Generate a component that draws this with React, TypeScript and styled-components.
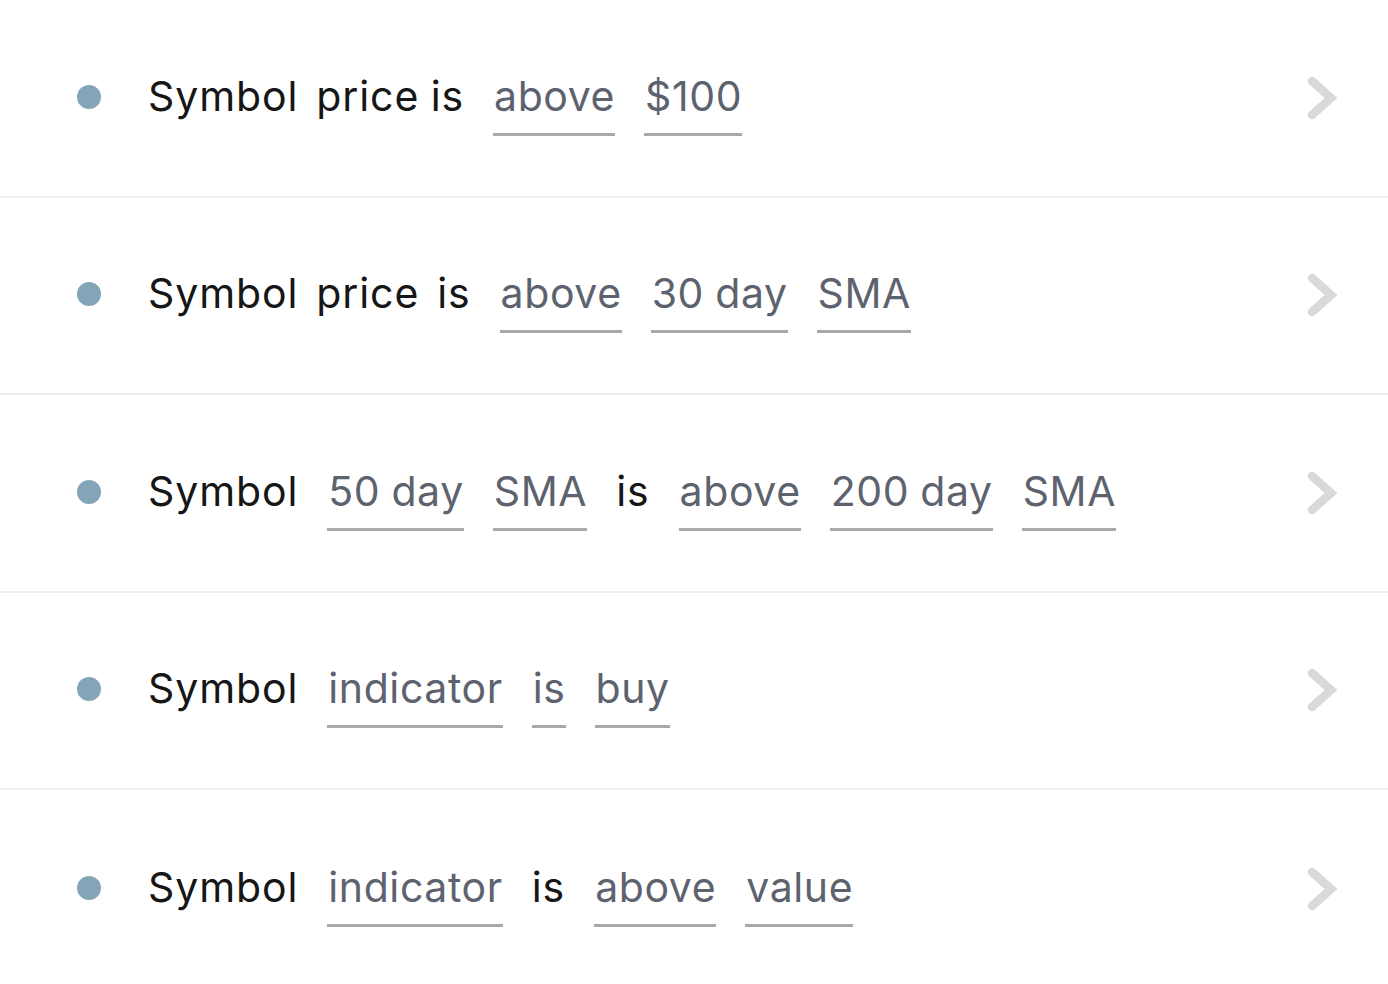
import React from 'react';
import styled, { createGlobalStyle } from 'styled-components';

const Global = createGlobalStyle`
  html, body { margin: 0; padding: 0; background: #fff; }
  body { font-family: Inter, "Open Sans", sans-serif; }
`;

type Part = { text: string; chip?: boolean; tight?: boolean };

const rules: Part[][] = [
  [{ text: 'Symbol' }, { text: 'price is', tight: true }, { text: 'above', chip: true }, { text: '$100', chip: true }],
  [{ text: 'Symbol' }, { text: 'price', tight: true }, { text: 'is', tight: true }, { text: 'above', chip: true }, { text: '30 day', chip: true }, { text: 'SMA', chip: true }],
  [{ text: 'Symbol' }, { text: '50 day', chip: true }, { text: 'SMA', chip: true }, { text: 'is' }, { text: 'above', chip: true }, { text: '200 day', chip: true }, { text: 'SMA', chip: true }],
  [{ text: 'Symbol' }, { text: 'indicator', chip: true }, { text: 'is', chip: true }, { text: 'buy', chip: true }],
  [{ text: 'Symbol' }, { text: 'indicator', chip: true }, { text: 'is' }, { text: 'above', chip: true }, { text: 'value', chip: true }],
];

const List = styled.div`
  display: flex;
  flex-direction: column;
  width: 1388px;
`;

const Row = styled.div`
  display: flex;
  align-items: center;
  height: 197.5px;
  padding: 0 50px 4px 77px;
  box-sizing: border-box;
  border-bottom: 2px solid #eeeeee;
  &:last-child { border-bottom: 0; }
`;

const Dot = styled.span`
  flex-shrink: 0;
  width: 24px;
  height: 24px;
  border-radius: 50%;
  background: #84a5b7;
  margin: 0 47px 0 0;
  position: relative;
  top: 1px;
`;

const Sentence = styled.div`
  flex: 1;
  display: flex;
  align-items: flex-start;
  gap: 29px;
  font-size: 41px;
  line-height: 54px;
  letter-spacing: 0.6px;
  word-spacing: -1px;
`;

const Word = styled.span<{ $tight: boolean }>`
  color: #161616;
  letter-spacing: 0.9px;
  margin-left: ${({ $tight }) => ($tight ? '-11px' : '0')};
`;

const Chip = styled.span`
  color: #5d636e;
  padding: 0 0 10px 1px;
  margin-bottom: -13px;
  border-bottom: 3px solid #a9a9a9;
`;

const Chevron = styled.svg`
  flex-shrink: 0;
  width: 32px;
  height: 46px;
  position: relative;
  top: 2px;
`;

export default function App() {
  return (
    <>
      <Global />
      <List>
        {rules.map((parts, i) => (
          <Row key={i}>
            <Dot />
            <Sentence>
              {parts.map((p, j) =>
                p.chip ? (
                  <Chip key={j}>{p.text}</Chip>
                ) : (
                  <Word key={j} $tight={!!p.tight}>{p.text}</Word>
                ),
              )}
            </Sentence>
            <Chevron viewBox="0 0 32 46">
              <polyline points="6,6 25,23 6,40" fill="none" stroke="#d9d9d9" strokeWidth="8.5" strokeLinecap="round" strokeLinejoin="miter" />
            </Chevron>
          </Row>
        ))}
      </List>
    </>
  );
}
